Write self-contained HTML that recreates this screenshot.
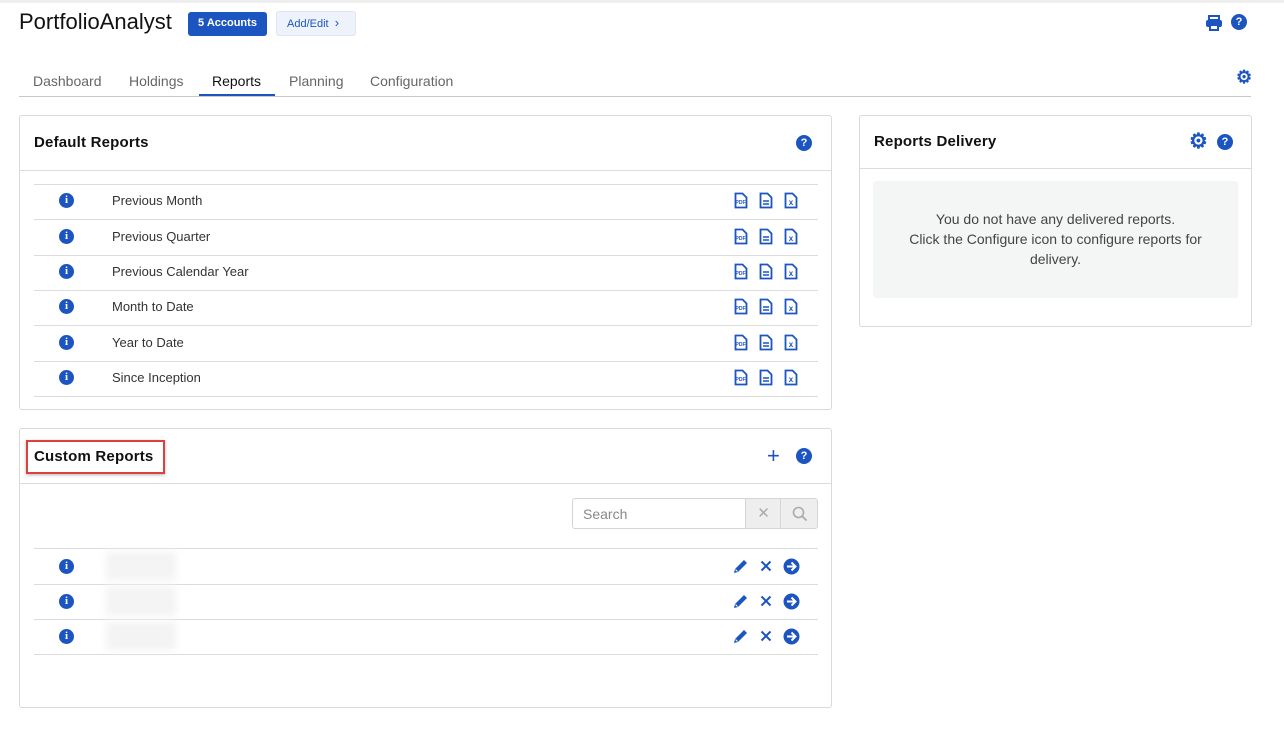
<!DOCTYPE html>
<html><head><meta charset="utf-8"><style>
*{margin:0;padding:0;box-sizing:border-box}
body{width:1284px;height:730px;background:#fff;font-family:"Liberation Sans",sans-serif;position:relative;overflow:hidden;color:#222}
.a{position:absolute}
.panel{position:absolute;border:1px solid #d9d9d9;border-radius:3px;background:#fff}
.h{font-size:15px;font-weight:bold;color:#111;letter-spacing:.2px}
.line{position:absolute;height:1px;background:#dcdcdc}
.txt{position:absolute;font-size:13px;color:#333}
.ic{position:absolute;width:15px;height:15px;border-radius:50%;background:#1c55c0;color:#fff;font:bold 11px "Liberation Serif",serif;text-align:center;line-height:15px}
.q{font:bold 11px "Liberation Sans",sans-serif;line-height:16px;width:16px;height:16px}
.tab{position:absolute;top:73px;font-size:14px;color:#666}
svg{position:absolute}
</style></head><body>
<div class="a" style="left:0;top:0;width:1284px;height:3px;background:#eee"></div>
<div class="a" style="left:19px;top:9px;font-size:22px;color:#111">PortfolioAnalyst</div>
<div class="a" style="left:188px;top:12px;width:79px;height:24px;background:#1c55c0;border-radius:3px;color:#fff;font-size:11px;font-weight:bold;text-align:center;line-height:22px">5 Accounts</div>
<div class="a" style="left:276px;top:11px;width:80px;height:25px;background:#eef3fb;border:1px solid #dfe6f2;border-radius:3px;color:#1c55c0;font-size:11px;line-height:22px;padding-left:10px">Add/Edit &nbsp;<span style="font-size:13px">›</span></div>
<svg style="left:1205px;top:14px" width="18" height="18" viewBox="0 0 18 18"><rect x="4" y="2" width="10" height="4" fill="none" stroke="#1c55c0" stroke-width="2"/><rect x="1" y="6" width="16" height="7" rx="2" fill="#1c55c0"/><rect x="5" y="11" width="8" height="5" fill="#fff" stroke="#1c55c0" stroke-width="2"/></svg>
<div class="ic q" style="left:1231px;top:14px">?</div>
<div class="tab" style="left:33px">Dashboard</div>
<div class="tab" style="left:129px">Holdings</div>
<div class="tab" style="left:212px;color:#111">Reports</div>
<div class="tab" style="left:289px">Planning</div>
<div class="tab" style="left:370px">Configuration</div>
<div class="a" style="left:1236px;top:67px;color:#1c55c0;font-size:18px;font-weight:bold">⚙</div>
<div class="line" style="left:19px;top:96px;width:1232px;background:#c8c8c8"></div>
<div class="a" style="left:199px;top:94px;width:76px;height:2px;background:#1c55c0"></div>

<div class="panel" style="left:19px;top:115px;width:813px;height:295px"></div>
<div class="h a" style="left:34px;top:134px">Default Reports</div>
<div class="ic q" style="left:796px;top:135px">?</div>
<div class="line" style="left:20px;top:170px;width:811px"></div>

<div class="panel" style="left:19px;top:428px;width:813px;height:280px"></div>
<div class="a" style="left:26px;top:440px;width:139px;height:34px;border:2px solid #e0403a;box-shadow:0 1px 3px rgba(0,0,0,.3)"></div>
<div class="h a" style="left:34px;top:448px">Custom Reports</div>
<div class="a" style="left:767px;top:443px;color:#1c55c0;font-size:22px">+</div>
<div class="ic q" style="left:796px;top:448px">?</div>
<div class="line" style="left:20px;top:483px;width:811px"></div>
<div class="a" style="left:572px;top:498px;width:246px;height:31px;border:1px solid #d5d5d5;border-radius:3px;overflow:hidden">
<div class="a" style="left:10px;top:7px;font-size:14px;color:#888">Search</div>
<div class="a" style="left:172px;top:0;width:36px;height:31px;background:#eee;border-left:1px solid #d5d5d5;color:#aaa;text-align:center;line-height:29px;font-size:15px">✕</div>
<div class="a" style="left:207px;top:0;width:38px;height:31px;background:#eee;border-left:1px solid #d5d5d5"></div>
<svg style="left:219px;top:7px" width="16" height="16" viewBox="0 0 16 16"><circle cx="6.5" cy="6.5" r="5" fill="none" stroke="#aaa" stroke-width="1.6"/><line x1="10" y1="10" x2="14.5" y2="14.5" stroke="#aaa" stroke-width="1.8"/></svg>
</div>

<div class="panel" style="left:859px;top:115px;width:393px;height:212px"></div>
<div class="h a" style="left:874px;top:133px">Reports Delivery</div>
<div class="a" style="left:1189px;top:129px;color:#1c55c0;font-size:21px;font-weight:bold">⚙</div>
<div class="ic q" style="left:1217px;top:134px">?</div>
<div class="line" style="left:860px;top:168px;width:391px"></div>
<div class="a" style="left:873px;top:181px;width:365px;height:117px;background:#f4f5f5;border-radius:3px;text-align:center;font-size:14px;color:#444;line-height:20px;padding:28px 20px 0">You do not have any delivered reports.<br>Click the Configure icon to configure reports for delivery.</div>

<div id="rows"></div>
<script>
var names=["Previous Month","Previous Quarter","Previous Calendar Year","Month to Date","Year to Date","Since Inception"];
var lines=[184,219,255,290,325,361,396],h="";
lines.forEach(function(y){h+='<div class="line" style="left:34px;top:'+y+'px;width:784px"></div>'});
function doc(x,y,inner){return '<svg style="left:'+x+'px;top:'+y+'px" width="14" height="17" viewBox="0 0 14 17"><path d="M1.5 1.5h7l4 4v10h-11z" fill="#fff" stroke="#1c55c0" stroke-width="1.8"/>'+inner+'</svg>'}
names.forEach(function(n,i){var c=[200,236,271,306,342,377][i];
h+='<div class="ic" style="left:59px;top:'+(c-7)+'px">i</div><div class="txt" style="left:112px;top:'+(c-7)+'px">'+n+'</div>';
h+=doc(734,c-8,'<text x="6.5" y="12" font-size="5" font-weight="bold" fill="#1c55c0" text-anchor="middle" font-family="Liberation Sans">PDF</text>');
h+=doc(759,c-8,'<path d="M4 9h6M4 12h6" stroke="#1c55c0" stroke-width="1.4"/>');
h+=doc(784,c-8,'<text x="7" y="13" font-size="8" font-weight="bold" fill="#1c55c0" text-anchor="middle" font-family="Liberation Sans">x</text>');});
[548,584,619,654].forEach(function(y){h+='<div class="line" style="left:34px;top:'+y+'px;width:784px"></div>'});
[566,601,636].forEach(function(c){
h+='<div class="ic" style="left:59px;top:'+(c-7)+'px">i</div><div class="a" style="left:106px;top:'+(c-14)+'px;width:70px;height:28px;background:#f3f3f3;filter:blur(4px)"></div>';
h+='<svg style="left:732px;top:'+(c-8)+'px" width="17" height="17" viewBox="0 0 17 17"><path d="M2 15l1-4 9-9 3 3-9 9z" fill="#1c55c0"/><path d="M3.5 11.5l2 2" stroke="#fff" stroke-width="1"/></svg>';
h+='<svg style="left:760px;top:'+(c-6)+'px" width="12" height="12" viewBox="0 0 12 12"><path d="M1.5 1.5l9 9M10.5 1.5l-9 9" stroke="#1c55c0" stroke-width="2"/></svg>';
h+='<svg style="left:783px;top:'+(c-8)+'px" width="17" height="17" viewBox="0 0 17 17"><circle cx="8.5" cy="8.5" r="8" fill="#1c55c0"/><path d="M4 8.5h8M8.5 4.5l4 4-4 4" stroke="#fff" stroke-width="2" fill="none"/></svg>';});
document.getElementById('rows').innerHTML=h;
</script>
</body></html>
